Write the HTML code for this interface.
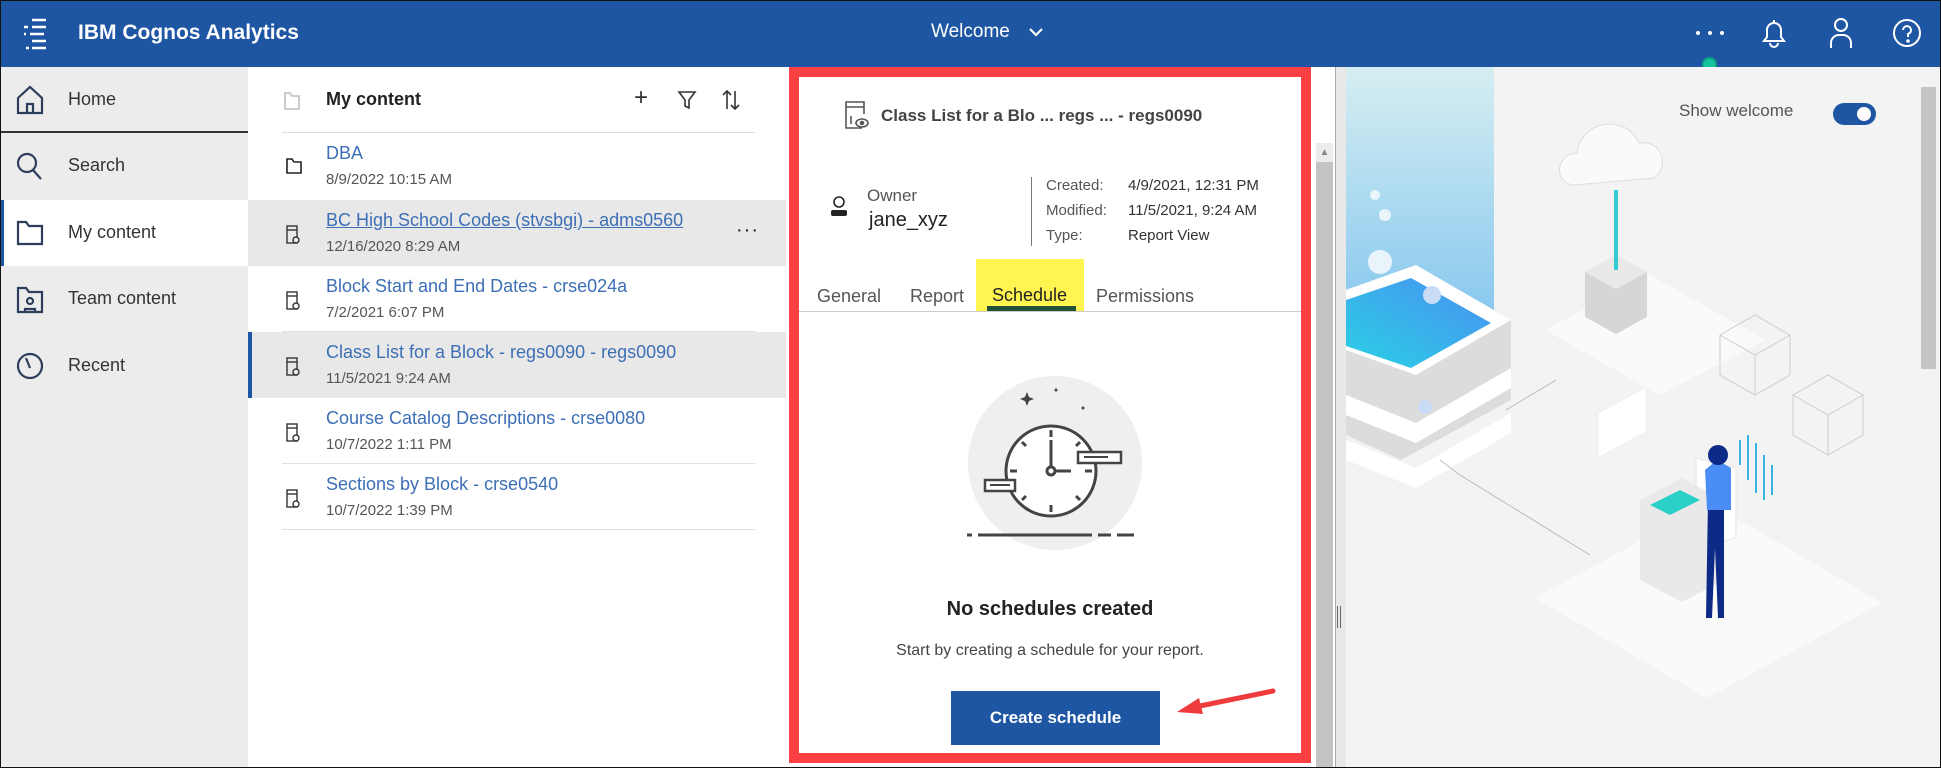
<!DOCTYPE html>
<html><head><meta charset="utf-8"><style>
*{box-sizing:border-box;margin:0;padding:0}
body{width:1941px;height:768px;overflow:hidden;font-family:"Liberation Sans",sans-serif;background:#fff;position:relative}
.abs{position:absolute}
svg{overflow:visible}
.hdr{left:0;top:0;width:1941px;height:67px;background:#1f56a3;color:#fff}
.side{left:0;top:67px;width:248px;height:701px;background:#ececec}
.si{position:absolute;left:0;width:248px;height:66px;font-size:18px;color:#333}
.si span{position:absolute;left:68px;top:22px}
.si svg{position:absolute;left:16px;top:18px}
.row{position:absolute;left:248px;width:538px;height:66px}
.row .t{position:absolute;left:78px;top:10px;font-size:18px;color:#3c6fb5;white-space:nowrap}
.row .d{position:absolute;left:78px;top:38px;font-size:15px;color:#555}
.row svg{position:absolute;left:38px;top:25px}
.row .ln{position:absolute;left:34px;width:473px;bottom:0;border-bottom:1px solid #e0e0e0}
</style></head><body>
<div class="abs hdr">
 <svg class="abs" style="left:22px;top:18px" width="28" height="32" viewBox="0 0 28 32" stroke="#fff" stroke-width="2.5"><line x1="10" y1="2" x2="24" y2="2"/><line x1="2" y1="9" x2="6" y2="9"/><line x1="10" y1="9" x2="24" y2="9"/><line x1="8" y1="16" x2="22" y2="16"/><line x1="2" y1="16" x2="4" y2="16"/><line x1="10" y1="23" x2="24" y2="23"/><line x1="4" y1="30" x2="7" y2="30"/><line x1="10" y1="30" x2="24" y2="30"/></svg>
 <div class="abs" style="left:78px;top:21px;font-size:21px;font-weight:bold">IBM Cognos Analytics</div>
 <div class="abs" style="left:931px;top:21px;font-size:19px">Welcome</div>
 <svg class="abs" style="left:1028px;top:26px" width="16" height="12" viewBox="0 0 16 12"><path d="M2 3l6 6 6-6" stroke="#fff" stroke-width="2.2" fill="none"/></svg>
 <div class="abs" style="left:1696px;top:31px;width:32px;height:6px">
  <span class="abs" style="left:0;top:0;width:4px;height:4px;border-radius:50%;background:#fff"></span>
  <span class="abs" style="left:12px;top:0;width:4px;height:4px;border-radius:50%;background:#fff"></span>
  <span class="abs" style="left:24px;top:0;width:4px;height:4px;border-radius:50%;background:#fff"></span></div>
 <svg class="abs" style="left:1760px;top:17px" width="28" height="32" viewBox="0 0 28 32" fill="none" stroke="#fff" stroke-width="2"><path d="M4 24h20l-3-4v-7a7 7 0 0 0-14 0v7z"/><path d="M10 26a4 4 0 0 0 8 0"/><line x1="14" y1="3" x2="14" y2="6"/></svg>
 <svg class="abs" style="left:1829px;top:17px" width="24" height="32" viewBox="0 0 24 32" fill="none" stroke="#fff" stroke-width="2"><circle cx="12" cy="8" r="6"/><path d="M2 31v-5a8 8 0 0 1 8-8h4a8 8 0 0 1 8 8v5"/></svg>
 <svg class="abs" style="left:1892px;top:18px" width="30" height="30" viewBox="0 0 30 30" fill="none" stroke="#fff" stroke-width="2"><circle cx="15" cy="15" r="13"/><path d="M11 12a4 4 0 1 1 5 4v3"/><circle cx="16" cy="23" r="0.8" fill="#fff"/></svg>
</div>
<div class="abs" style="left:1702px;top:57px;width:15px;height:15px;border-radius:50%;border:2px solid #0da58a;background:#17c39a"></div>

<div class="abs side">
 <div class="si" style="top:0;border-bottom:2px solid #333"><svg width="28" height="30" viewBox="0 0 28 30" fill="none" stroke="#2d3e5c" stroke-width="2.2"><path d="M2 13L14 2l12 11v15H2z"/><path d="M11 28v-9h6v9"/></svg><span>Home</span></div>
 <div class="si" style="top:66px"><svg width="28" height="30" viewBox="0 0 28 30" fill="none" stroke="#2d3e5c" stroke-width="2.2"><circle cx="11" cy="12" r="9"/><line x1="17" y1="19" x2="25" y2="28"/></svg><span>Search</span></div>
 <div class="si" style="top:133px;background:#fff;border-left:4px solid #1f56a3"><svg width="28" height="30" viewBox="0 0 28 30" fill="none" stroke="#2d3e5c" stroke-width="2.2" style="left:12px"><path d="M2 4h8l3 4h13v18H2z"/></svg><span style="left:64px">My content</span></div>
 <div class="si" style="top:199px"><svg width="28" height="30" viewBox="0 0 28 30" fill="none" stroke="#2d3e5c" stroke-width="2.2"><path d="M2 4h8l3 4h13v20H2z"/><circle cx="14" cy="17" r="3"/><path d="M9 27v-2h10v2"/></svg><span>Team content</span></div>
 <div class="si" style="top:266px"><svg width="28" height="30" viewBox="0 0 28 30" fill="none" stroke="#2d3e5c" stroke-width="2.2"><circle cx="14" cy="15" r="12"/><path d="M10 7l4 10"/></svg><span>Recent</span></div>
</div>

<svg class="abs" style="left:284px;top:91px" width="16" height="20" viewBox="0 0 16 20" fill="none" stroke="#bbb" stroke-width="1.5"><path d="M1 2h5l2 3h7v13H1z"/></svg>
<div class="abs" style="left:326px;top:89px;font-size:18px;font-weight:bold;color:#222">My content</div>
<div class="abs" style="left:634px;top:84px;font-size:24px;color:#333">+</div>
<svg class="abs" style="left:678px;top:90px" width="18" height="20" viewBox="0 0 18 20" fill="none" stroke="#333" stroke-width="1.6"><path d="M1 2h16l-6 8v8l-4-2v-6z"/></svg>
<svg class="abs" style="left:721px;top:89px" width="20" height="22" viewBox="0 0 20 22" fill="none" stroke="#333" stroke-width="1.6"><path d="M6 20V2M2 6l4-4 4 4M14 2v18M10 16l4 4 4-4"/></svg>
<div class="abs" style="left:282px;top:132px;width:473px;border-top:1px solid #ddd"></div>

<div class="row" style="top:133px"><svg width="16" height="16" viewBox="0 0 16 16" fill="none" stroke="#222" stroke-width="1.6"><path d="M1 1h5l2 3h7v11H1z"/></svg><div class="t">DBA</div><div class="d">8/9/2022 10:15 AM</div></div>
<div class="row" style="top:200px;background:#e8e8e8"><svg width="14" height="20" viewBox="0 0 14 20" fill="none" stroke="#333" stroke-width="1.4"><rect x="1" y="1" width="10" height="17"/><line x1="1" y1="5" x2="11" y2="5"/><circle cx="10" cy="15" r="3" fill="#e8e8e8"/></svg><div class="t" style="text-decoration:underline">BC High School Codes (stvsbgi) - adms0560</div><div class="d">12/16/2020 8:29 AM</div><div class="abs" style="left:488px;top:19px;font-size:20px;color:#222;letter-spacing:1px">···</div></div>
<div class="row" style="top:266px"><svg width="14" height="20" viewBox="0 0 14 20" fill="none" stroke="#333" stroke-width="1.4"><rect x="1" y="1" width="10" height="17"/><line x1="1" y1="5" x2="11" y2="5"/><circle cx="10" cy="15" r="3" fill="#fff"/></svg><div class="t">Block Start and End Dates - crse024a</div><div class="d">7/2/2021 6:07 PM</div><div class="ln"></div></div>
<div class="row" style="top:332px;background:#e8e8e8;border-left:4px solid #1f56a3"><svg width="14" height="20" viewBox="0 0 14 20" fill="none" stroke="#333" stroke-width="1.4" style="left:34px"><rect x="1" y="1" width="10" height="17"/><line x1="1" y1="5" x2="11" y2="5"/><circle cx="10" cy="15" r="3" fill="#e8e8e8"/></svg><div class="t" style="left:74px">Class List for a Block - regs0090 - regs0090</div><div class="d" style="left:74px">11/5/2021 9:24 AM</div></div>
<div class="row" style="top:398px"><svg width="14" height="20" viewBox="0 0 14 20" fill="none" stroke="#333" stroke-width="1.4"><rect x="1" y="1" width="10" height="17"/><line x1="1" y1="5" x2="11" y2="5"/><circle cx="10" cy="15" r="3" fill="#fff"/></svg><div class="t">Course Catalog Descriptions - crse0080</div><div class="d">10/7/2022 1:11 PM</div><div class="ln"></div></div>
<div class="row" style="top:464px"><svg width="14" height="20" viewBox="0 0 14 20" fill="none" stroke="#333" stroke-width="1.4"><rect x="1" y="1" width="10" height="17"/><line x1="1" y1="5" x2="11" y2="5"/><circle cx="10" cy="15" r="3" fill="#fff"/></svg><div class="t">Sections by Block - crse0540</div><div class="d">10/7/2022 1:39 PM</div><div class="ln"></div></div>

<div class="abs" style="left:1316px;top:143px;width:17px;height:19px;background:#ececec;color:#888;font-size:10px;text-align:center;line-height:19px">▲</div>
<div class="abs" style="left:1316px;top:162px;width:17px;height:606px;background:#c4c4c4"></div>
<div class="abs" style="left:1335px;top:67px;width:11px;height:701px;background:#e8e8e8;border-left:1px solid #aaa"></div>
<div class="abs" style="left:1337px;top:606px;width:4px;height:22px;border-left:1px solid #666;border-right:1px solid #666"></div>

<div class="abs" style="left:789px;top:67px;width:522px;height:696px;border:10px solid #fb4043;background:#fff">
 <svg class="abs" style="left:45px;top:24px" width="26" height="30" viewBox="0 0 26 30" fill="none" stroke="#555" stroke-width="1.6"><path d="M18 27H2V1h18v12"/><line x1="2" y1="6" x2="20" y2="6"/><line x1="7" y1="15" x2="7" y2="23"/><ellipse cx="18" cy="22" rx="6" ry="4"/><circle cx="18" cy="22" r="1.5" fill="#555"/></svg>
 <div class="abs" style="left:82px;top:29px;font-size:17px;font-weight:bold;color:#444">Class List for a Blo ... regs ... - regs0090</div>
 <svg class="abs" style="left:31px;top:119px" width="18" height="22" viewBox="0 0 18 22"><circle cx="9" cy="6" r="5" fill="none" stroke="#222" stroke-width="1.6"/><rect x="1" y="14" width="16" height="6" rx="2" fill="#222"/></svg>
 <div class="abs" style="left:68px;top:109px;font-size:17px;color:#555">Owner</div>
 <div class="abs" style="left:70px;top:132px;font-size:20px;color:#222">jane_xyz</div>
 <div class="abs" style="left:232px;top:100px;width:1px;height:69px;background:#777"></div>
 <div class="abs" style="left:247px;top:96px;font-size:15px;color:#555;line-height:25px">Created:<br>Modified:<br>Type:</div>
 <div class="abs" style="left:329px;top:96px;font-size:15px;color:#333;line-height:25px">4/9/2021, 12:31 PM<br>11/5/2021, 9:24 AM<br>Report View</div>
 <div class="abs" style="left:177px;top:182px;width:108px;height:53px;background:#fff450"></div>
 <div class="abs" style="left:188px;top:229px;width:89px;height:5px;background:#1f5237"></div>
 <div class="abs" style="left:0;top:234px;width:502px;height:1px;background:#ccc"></div>
 <div class="abs" style="left:18px;top:209px;font-size:18px;color:#555">General</div>
 <div class="abs" style="left:111px;top:209px;font-size:18px;color:#555">Report</div>
 <div class="abs" style="left:193px;top:208px;font-size:18px;color:#222">Schedule</div>
 <div class="abs" style="left:297px;top:209px;font-size:18px;color:#555">Permissions</div>
 <svg class="abs" style="left:166px;top:303px" width="180" height="180" viewBox="0 0 180 180" fill="none" stroke="#444" stroke-width="3">
  <circle cx="90" cy="83" r="87" fill="#efefef" stroke="none"/>
  <circle cx="86" cy="91" r="45" fill="#fff"/>
  <line x1="86" y1="60" x2="86" y2="86"/><line x1="91" y1="91" x2="106" y2="91"/><circle cx="86" cy="91" r="4"/>
  <line x1="86" y1="50" x2="86" y2="57"/><line x1="86" y1="125" x2="86" y2="132"/><line x1="45" y1="91" x2="52" y2="91"/><line x1="120" y1="91" x2="127" y2="91"/>
  <line x1="57" y1="62" x2="61" y2="66"/><line x1="115" y1="62" x2="111" y2="66"/><line x1="57" y1="120" x2="61" y2="116"/><line x1="115" y1="120" x2="111" y2="116"/>
  <rect x="113" y="72" width="43" height="11" fill="#fff" stroke-width="2.5"/><line x1="119" y1="77" x2="143" y2="77" stroke-width="2"/>
  <rect x="20" y="100" width="30" height="11" fill="#fff" stroke-width="2.5"/><line x1="25" y1="105" x2="45" y2="105" stroke-width="2"/>
  <path d="M2 155h5M13 155h114M133 155h13M152 155h17"/>
  <path d="M62 12l2 5 5 2-5 2-2 5-2-5-5-2 5-2z" fill="#444" stroke="none"/><circle cx="91" cy="10" r="1.5" fill="#444" stroke="none"/><circle cx="118" cy="28" r="1.5" fill="#444" stroke="none"/>
 </svg>
 <div class="abs" style="left:0;width:502px;text-align:center;top:521px;font-size:20px;font-weight:bold;color:#222">No schedules created</div>
 <div class="abs" style="left:0;width:502px;text-align:center;top:565px;font-size:16px;color:#444">Start by creating a schedule for your report.</div>
 <div class="abs" style="left:152px;top:614px;width:209px;height:54px;background:#1f56a3;color:#fff;font-size:17px;font-weight:bold;text-align:center;line-height:54px">Create schedule</div>
 <svg class="abs" style="left:372px;top:606px" width="110" height="40" viewBox="0 0 110 40"><path d="M102 8L24 24" stroke="#ef3b3b" stroke-width="5" stroke-linecap="round"/><path d="M6 29l22-14 4 16z" fill="#ef3b3b"/></svg>
</div>

<div class="abs" style="left:1346px;top:67px;width:595px;height:701px;background:#f3f3f3"></div>
<div class="abs" style="left:1346px;top:67px;width:148px;height:280px;background:linear-gradient(#d6eef2,#7ec3ee)"></div>
<svg class="abs" style="left:0;top:0" width="1941" height="768" viewBox="0 0 1941 768">
 <defs><linearGradient id="g1" x1="1" y1="0" x2="0" y2="1"><stop offset="0" stop-color="#4a8ff0"/><stop offset="1" stop-color="#2ad0e6"/></linearGradient></defs>
 <path d="M1346 290l70-25 95 55v80l-110 60-55-25z" fill="#dcdcdc"/>
 <path d="M1346 290l70-25 95 55-95 55-70-25z" fill="#fff"/>
 <path d="M1346 300l65-22 80 45-80 45-65-22z" fill="url(#g1)"/>
 <path d="M1346 395l70 28 95-55v20l-95 55-70-28z" fill="#fff"/>
 <path d="M1346 440l70 28 95-55v20l-95 55-70-28z" fill="#fff"/>
 <circle cx="1375" cy="195" r="5" fill="#eaf5fb"/><circle cx="1385" cy="215" r="6" fill="#eaf5fb"/><circle cx="1380" cy="262" r="12" fill="#eaf5fb"/><circle cx="1432" cy="295" r="9" fill="#c8dcf8"/><circle cx="1425" cy="407" r="7" fill="#c8dcf8"/>
 <path d="M1545 330l105-55 115 65-105 55z" fill="#fafafa"/>
 <path d="M1585 272l31-17 31 17v45l-31 17-31-17z" fill="#d6d6d6"/>
 <path d="M1585 272l31-17 31 17-31 17z" fill="#e9e9e9"/>
 <path d="M1575 185c-20 0-22-30 2-32 5-35 50-38 62-10 25-3 30 25 15 35z" fill="#fafafa" stroke="#ddd"/>
 <rect x="1614" y="190" width="4" height="80" fill="#36cbd0"/>
 <path d="M1535 598l175-95 172 100-175 95z" fill="#fafafa"/>
 <path d="M1696 458l40 10v70l-40 10z" fill="#fff" stroke="#e6e6e6"/>
 <path d="M1640 500l42-22 42 22v80l-42 22-42-22z" fill="#e9e9e9"/>
 <path d="M1650 505l30-15 20 10-30 15z" fill="#2ad0c6"/>
 <path d="M1708 500h16v118h-6l-3-70-3 70h-6z" fill="#0d2a87"/>
 <path d="M1705 470l12-10 14 8v42h-24z" fill="#4a8ef5"/>
 <circle cx="1718" cy="455" r="10" fill="#0d2a87"/>
 <path d="M1598 413l48-26v45l-48 26z" fill="#fff" stroke="#eee"/>
 <path d="M1740 440v25M1748 435v45M1756 443v50M1764 455v45M1772 465v30" stroke="#36b6e0" stroke-width="2"/>
 <path d="M1720 335l35-20 35 20v40l-35 20-35-20zM1720 335l35 20 35-20M1755 355v40" fill="none" stroke="#ccc"/>
 <path d="M1793 395l35-20 35 20v40l-35 20-35-20zM1793 395l35 20 35-20M1828 415v40" fill="none" stroke="#ccc"/>
 <path d="M1506 410l50-30M1440 460l20 15 130 80" stroke="#bbb" fill="none"/>
</svg>
<div class="abs" style="left:1679px;top:101px;font-size:17px;color:#555">Show welcome</div>
<div class="abs" style="left:1833px;top:103px;width:43px;height:22px;border-radius:11px;background:#1f56a3"><div style="position:absolute;left:24px;top:4px;width:14px;height:14px;border-radius:50%;background:#fff"></div></div>
<div class="abs" style="left:1921px;top:87px;width:15px;height:282px;background:#c4c4c4"></div>
<div class="abs" style="left:0;top:0;width:1941px;height:768px;border:1px solid #111;pointer-events:none"></div>
</body></html>
